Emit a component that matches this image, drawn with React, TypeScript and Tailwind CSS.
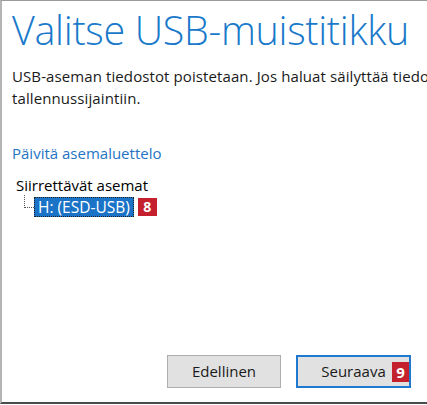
import React from "react";

export default function App() {
  return (
    <div className="relative w-[427px] h-[405px] overflow-hidden bg-white" style={{ fontFamily: '"Open Sans", "Noto Sans", sans-serif' }}>
      <div className="flex flex-col w-[427px] h-[404px] border-t border-t-[#9a9a9a] border-l-2 border-l-[#b4b4b4] border-b-2 border-b-[#4a4a4a]">
        <div className="flex flex-col flex-1 pl-[10px] overflow-hidden">
          <h1 className="mt-[3px] text-[39.5px] leading-[52px] font-light text-[#1979ca] whitespace-nowrap tracking-[-0.3px]">
            Valitse USB-muistitikku
          </h1>
          <div className="mt-[9px] text-[15px] leading-[22px] text-[#1a1a1a] whitespace-nowrap tracking-[0.1px]">
            <div>USB-aseman tiedostot poistetaan. Jos haluat säilyttää tiedostot, kopioi ne toiseen</div>
            <div>tallennussijaintiin.</div>
          </div>
          <div className="mt-[34px] text-[15px] leading-[20px] text-[#1f74c4]">Päivitä asemaluettelo</div>
          <div className="mt-[12px] ml-[4px] text-[15px] leading-[20px] text-black">Siirrettävät asemat</div>
          <div className="flex items-start ml-[12px]">
            <div className="w-[10px] h-[13px] border-l border-b border-dotted border-[#555]" />
            <div className="flex items-center mt-[2px]">
              <div className="px-[3px] h-[20px] flex items-center bg-[#1a73c6] text-white text-[15.5px] leading-[18px] border border-dotted border-[#222]">
                H: (ESD-USB)
              </div>
              <div className="ml-[4px] w-[19px] h-[18px] bg-[#c5202e] text-white text-[14px] font-bold flex items-center justify-center leading-none">8</div>
            </div>
          </div>
          <div className="flex-1" />
          <div className="flex justify-end items-center gap-[15px] pr-[16px] mb-[14px]">
            <div className="w-[114px] h-[33px] flex items-center justify-center bg-[#e1e1e1] border border-[#adadad] text-[15px] text-[#1a1a1a]">
              Edellinen
            </div>
            <div className="relative w-[115px] h-[33px] flex items-center justify-center bg-[#e1e1e1] border-2 border-[#1e7ad0] text-[15px] text-[#1a1a1a]">
              Seuraava
              <div className="absolute right-[0px] top-[5px] w-[17px] h-[20px] bg-[#c5202e] text-white text-[15px] font-bold flex items-center justify-center leading-none">9</div>
            </div>
          </div>
        </div>
      </div>
    </div>
  );
}
